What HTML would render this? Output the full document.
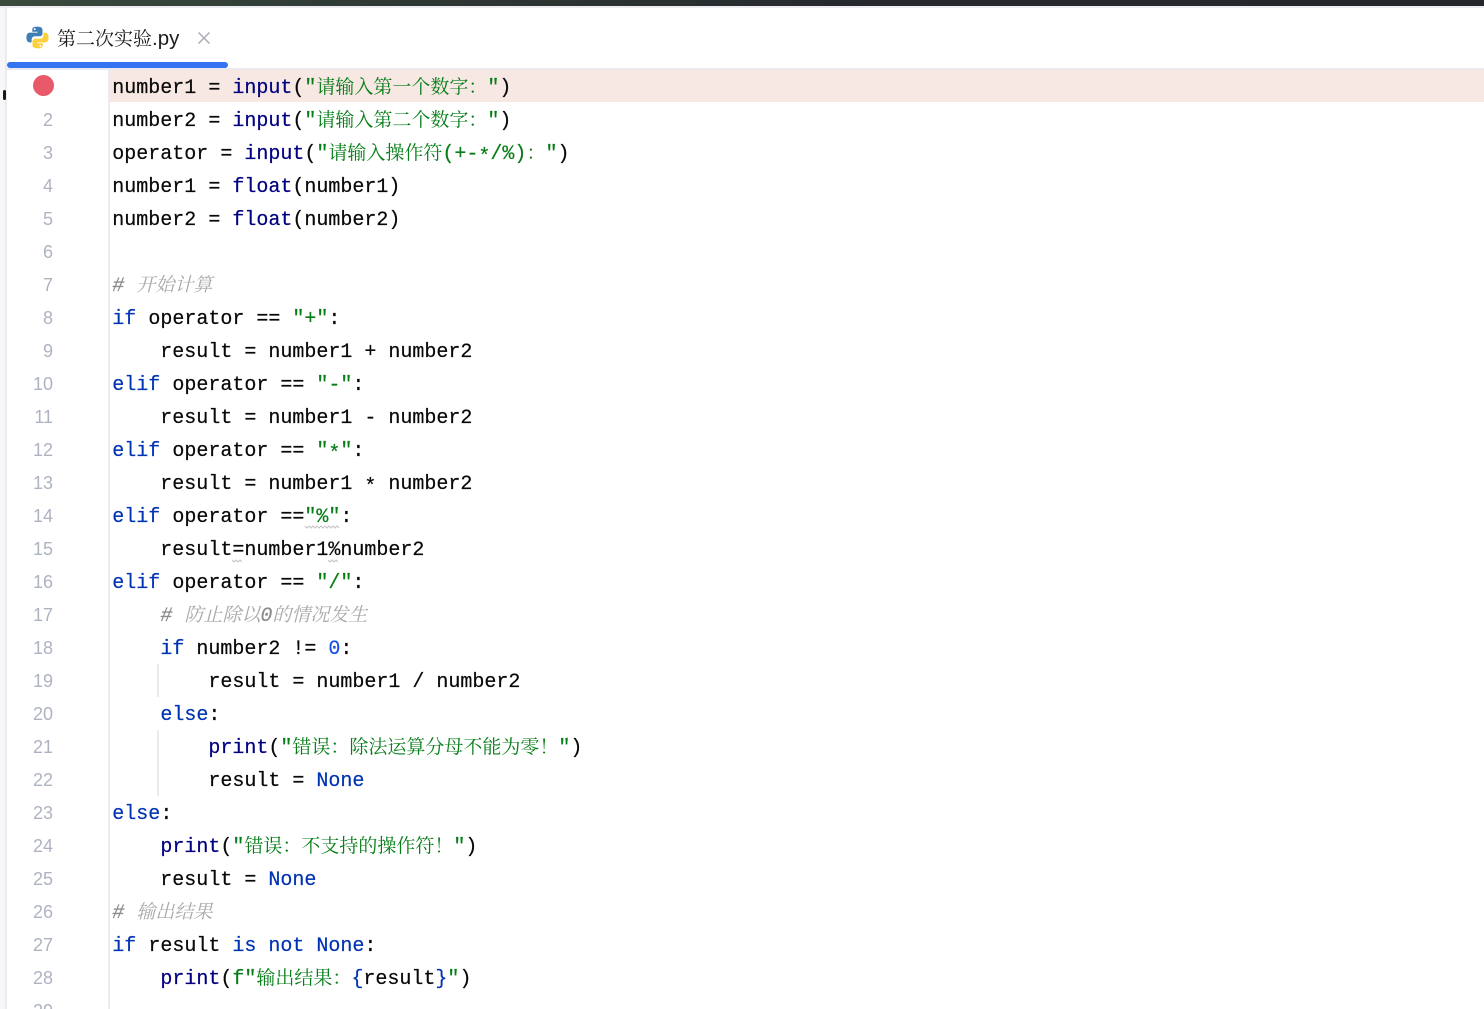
<!DOCTYPE html>
<html lang="zh-CN">
<head>
<meta charset="utf-8">
<title>第二次实验.py</title>
<style>
html,body{margin:0;padding:0;background:#fff;width:1484px;height:1009px;overflow:hidden;}
#w{position:relative;width:1484px;height:1009px;overflow:hidden;contain:paint;font-family:"Liberation Mono","Noto Serif CJK SC",monospace;}
.abs{position:absolute;}
.l{position:absolute;left:112.300px;height:33px;line-height:33px;margin-top:3px;font-size:20px;color:#080808;white-space:pre;-webkit-text-stroke:.2px currentColor;}
.n{position:absolute;left:0;width:53px;margin-top:2px;text-align:right;height:33px;line-height:33px;font-family:"Liberation Sans",sans-serif;font-size:18px;color:#aeb3c2;}
.k{color:#0033b3;}
.b{color:#000080;}
.s{color:#067d17;}
.d{color:#1750eb;}
.c{color:#8c8c8c;font-style:italic;}
.z{font-family:"Noto Serif CJK SC","Liberation Serif",serif;font-size:19px;line-height:1;-webkit-text-stroke:0;}
.c .z{color:#a8a8a8;}
.g{position:absolute;left:157px;width:2px;background:#ebebeb;}
.a{position:relative;top:3px;}
</style>
</head>
<body>
<div id="w">
<div class="abs" style="left:0;top:0;width:1484px;height:6px;background:linear-gradient(90deg,#3a4a3c 0,#2f3a36 25%,#26282c 60%,#26272b 100%);"></div>
<div class="abs" style="left:0;top:6px;width:1484px;height:2px;background:#eeeef2;"></div>
<div class="abs" style="left:0;top:8px;width:5px;height:1001px;background:#f7f7fa;"></div>
<div class="abs" style="left:5px;top:8px;width:2px;height:1001px;background:#ebebf1;"></div>
<div class="abs" style="left:3px;top:90px;width:3px;height:10px;border-radius:2px;background:#1a1a12;"></div>

<svg class="abs" style="left:26px;top:26px" width="23" height="23" viewBox="0 0 23 23">
<path fill="#3f7fb5" d="M11.3 .6C6.6.6 6.3 2.2 6.300 3.700V5.800H11.600V6.600H3.900C1.800 6.600.4 8.200.4 11.400C.4 14.800 1.700 16.400 3.700 16.400H5.600V13.800C5.600 11.700 7.100 10.300 9.100 10.300H13.700C15.300 10.300 16.500 9.100 16.500 7.500V3.700C16.500 2 14.900.6 11.300.6ZM8.700 2.100A1 1 0 1 1 8.700 4.100A1 1 0 1 1 8.700 2.100Z"/>
<path fill="#fbd03e" d="M11.700 22.400C16.400 22.400 16.700 20.800 16.700 19.300V17.200H11.400V16.400H19.100C21.200 16.400 22.600 14.800 22.600 11.600C22.600 8.200 21.300 6.600 19.300 6.600H17.400V9.200C17.400 11.300 15.900 12.700 13.900 12.700H9.300C7.700 12.700 6.500 13.900 6.500 15.500V19.300C6.500 21 8.100 22.400 11.700 22.400ZM14.300 20.900A1 1 0 1 1 14.300 18.900A1 1 0 1 1 14.300 20.900Z"/>
</svg>
<div class="abs" style="left:57px;top:25px;height:28px;line-height:28px;white-space:pre;font-family:'Liberation Sans','Noto Serif CJK SC',sans-serif;font-size:20.500px;color:#1a1a1a;"><span style="font-family:'Noto Serif CJK SC',serif;font-size:19px;line-height:1;">第二次实验</span>.py</div>
<svg class="abs" style="left:197px;top:31px" width="14" height="14" viewBox="0 0 14 14"><path d="M1.500 1.500L12.500 12.500M12.500 1.500L1.500 12.500" stroke="#a9acb8" stroke-width="1.500" fill="none"/></svg>

<div class="abs" style="left:7px;top:68px;width:1477px;height:2px;background:#e9e9ee;"></div>
<div class="abs" style="left:7px;top:62px;width:221px;height:6px;border-radius:3px;background:#3574f0;"></div>
<div class="abs" style="left:110px;top:70px;width:1374px;height:32px;background:#f7e8e4;"></div>
<div class="abs" style="left:108px;top:68px;width:2px;height:941px;background:#ebecf0;"></div>
<div class="abs" style="left:32.500px;top:75px;width:21px;height:21px;border-radius:50%;background:#e85a69;"></div>

<div class="g" style="top:664px;height:33px;"></div>
<div class="g" style="top:730px;height:66px;"></div>

<div class="n" style="top:102px">2</div>
<div class="n" style="top:135px">3</div>
<div class="n" style="top:168px">4</div>
<div class="n" style="top:201px">5</div>
<div class="n" style="top:234px">6</div>
<div class="n" style="top:267px">7</div>
<div class="n" style="top:300px">8</div>
<div class="n" style="top:333px">9</div>
<div class="n" style="top:366px">10</div>
<div class="n" style="top:399px">11</div>
<div class="n" style="top:432px">12</div>
<div class="n" style="top:465px">13</div>
<div class="n" style="top:498px">14</div>
<div class="n" style="top:531px">15</div>
<div class="n" style="top:564px">16</div>
<div class="n" style="top:597px">17</div>
<div class="n" style="top:630px">18</div>
<div class="n" style="top:663px">19</div>
<div class="n" style="top:696px">20</div>
<div class="n" style="top:729px">21</div>
<div class="n" style="top:762px">22</div>
<div class="n" style="top:795px">23</div>
<div class="n" style="top:828px">24</div>
<div class="n" style="top:861px">25</div>
<div class="n" style="top:894px">26</div>
<div class="n" style="top:927px">27</div>
<div class="n" style="top:960px">28</div>
<div class="n" style="top:993px">29</div>

<div class="l" style="top:69px">number1 = <span class="b">input</span>(<span class="s">"<span class="z">请输入第一个数字：</span>"</span>)</div>
<div class="l" style="top:102px">number2 = <span class="b">input</span>(<span class="s">"<span class="z">请输入第二个数字：</span>"</span>)</div>
<div class="l" style="top:135px">operator = <span class="b">input</span>(<span class="s">"<span class="z">请输入操作符</span>(+-<span class="a">*</span>/%)<span class="z">：</span>"</span>)</div>
<div class="l" style="top:168px">number1 = <span class="b">float</span>(number1)</div>
<div class="l" style="top:201px">number2 = <span class="b">float</span>(number2)</div>
<div class="l" style="top:267px"><span class="c"># <span class="z">开始计算</span></span></div>
<div class="l" style="top:300px"><span class="k">if</span> operator == <span class="s">"+"</span>:</div>
<div class="l" style="top:333px">    result = number1 + number2</div>
<div class="l" style="top:366px"><span class="k">elif</span> operator == <span class="s">"-"</span>:</div>
<div class="l" style="top:399px">    result = number1 - number2</div>
<div class="l" style="top:432px"><span class="k">elif</span> operator == <span class="s">"<span class="a">*</span>"</span>:</div>
<div class="l" style="top:465px">    result = number1 <span class="a">*</span> number2</div>
<div class="l" style="top:498px"><span class="k">elif</span> operator ==<span class="s">"%"</span>:</div>
<div class="l" style="top:531px">    result=number1%number2</div>
<div class="l" style="top:564px"><span class="k">elif</span> operator == <span class="s">"/"</span>:</div>
<div class="l" style="top:597px">    <span class="c"># <span class="z">防止除以</span>0<span class="z">的情况发生</span></span></div>
<div class="l" style="top:630px">    <span class="k">if</span> number2 != <span class="d">0</span>:</div>
<div class="l" style="top:663px">        result = number1 / number2</div>
<div class="l" style="top:696px">    <span class="k">else</span>:</div>
<div class="l" style="top:729px">        <span class="b">print</span>(<span class="s">"<span class="z">错误：除法运算分母不能为零！</span>"</span>)</div>
<div class="l" style="top:762px">        result = <span class="k">None</span></div>
<div class="l" style="top:795px"><span class="k">else</span>:</div>
<div class="l" style="top:828px">    <span class="b">print</span>(<span class="s">"<span class="z">错误：不支持的操作符！</span>"</span>)</div>
<div class="l" style="top:861px">    result = <span class="k">None</span></div>
<div class="l" style="top:894px"><span class="c"># <span class="z">输出结果</span></span></div>
<div class="l" style="top:927px"><span class="k">if</span> result <span class="k">is</span> <span class="k">not</span> <span class="k">None</span>:</div>
<div class="l" style="top:960px">    <span class="b">print</span>(<span class="s">f"<span class="z">输出结果：</span><span class="k">{</span><span style="color:#080808">result</span><span class="k">}</span>"</span>)</div>

<svg class="abs" style="left:0;top:0;pointer-events:none" width="1484" height="1009" viewBox="0 0 1484 1009">
<g fill="none" stroke="#c4c4c4" stroke-width="1">
<path d="M305 526l2 2 2-2 2 2 2-2 2 2 2-2 2 2 2-2 2 2 2-2 2 2 2-2 2 2 2-2 2 2 2-2 2 2"/>
<path d="M232 560l2 2 2-2 2 2 2-2 2 2"/>
<path d="M328 560l2 2 2-2 2 2 2-2 2 2"/>
</g>
</svg>
</div>
</body>
</html>
